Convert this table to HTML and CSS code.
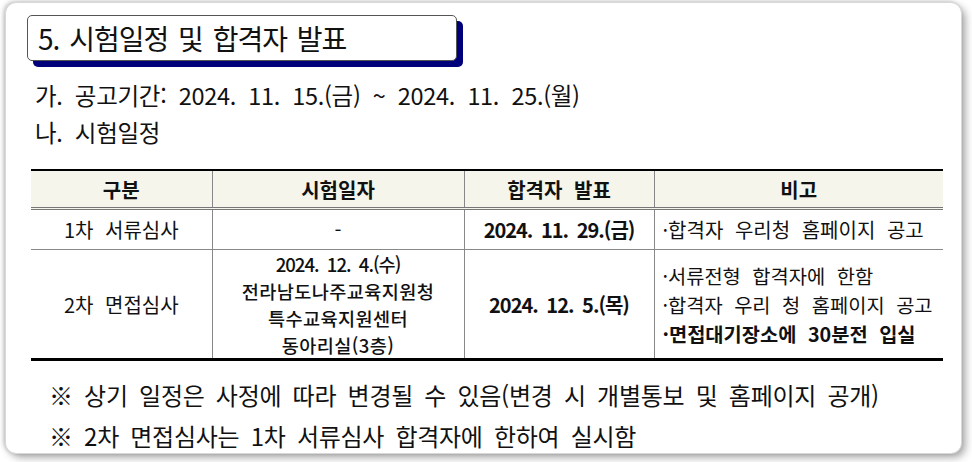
FILE: index.html
```html
<!DOCTYPE html>
<html lang="ko">
<head>
<meta charset="utf-8">
<link rel="stylesheet" href="styles.css">
</head>
<body>
<div class="page">
  <div class="card">
    <div class="title-wrap">
      <div class="title">5. 시험일정 및 합격자 발표</div>
    </div>
    <p class="item item-first">가. 공고기간: 2024. 11. 15.(금) ~ 2024. 11. 25.(월)</p>
    <p class="item">나. 시험일정</p>
    <table class="sched">
      <colgroup>
        <col class="c1"><col class="c2"><col class="c3"><col class="c4">
      </colgroup>
      <thead>
        <tr><th>구분</th><th>시험일자</th><th>합격자 발표</th><th>비고</th></tr>
      </thead>
      <tbody>
        <tr class="r1">
          <td>1차 서류심사</td>
          <td>-</td>
          <td class="bold date">2024. 11. 29.(금)</td>
          <td class="left">·합격자 우리청 홈페이지 공고</td>
        </tr>
        <tr class="r2">
          <td>2차 면접심사</td>
          <td class="med multi"><span class="date">2024. 12. 4.(수)</span><br>전라남도나주교육지원청<br>특수교육지원센터<br>동아리실(3층)</td>
          <td class="bold date">2024. 12. 5.(목)</td>
          <td class="left multi2">·서류전형 합격자에 한함<br>·합격자 우리 청 홈페이지 공고<br><b>·면접대기장소에 30분전 입실</b></td>
        </tr>
      </tbody>
    </table>
    <p class="note note-first">※ 상기 일정은 사정에 따라 변경될 수 있음(변경 시 개별통보 및 홈페이지 공개)</p>
    <p class="note">※ 2차 면접심사는 1차 서류심사 합격자에 한하여 실시함</p>
  </div>
</div>
</body>
</html>
```

FILE: styles.css
```css
html, body {
  margin: 0;
  padding: 0;
  background: #ffffff;
}
body {
  font-family: "Noto Sans CJK KR", "Noto Sans", sans-serif;
  color: #111;
}
.page {
  width: 972px;
  height: 462px;
  box-sizing: border-box;
  padding: 3px 11px 9px 6px;
  background: #fff;
}
.card {
  height: 100%;
  box-sizing: border-box;
  border-radius: 10px;
  background: #fff;
  box-shadow: 0 0 0 1px #d8d8d8, -2px -1px 5px rgba(0,0,0,0.28), 4px 4px 9px rgba(0,0,0,0.38);
  padding: 12px 0 0 21px;
}
.title-wrap {
  display: flex;
}
.title {
  width: 430px;
  height: 46px;
  box-sizing: border-box;
  border: 1px solid #555;
  border-radius: 5px;
  box-shadow: 6px 6px 0 #00007a;
  background: #fff;
  font-size: 28px;
  line-height: 44px;
  padding-left: 10px;
  letter-spacing: -1px;
  word-spacing: 3px;
}
.item {
  margin: 0;
  font-size: 23.5px;
  line-height: 37px;
  padding-left: 8px;
  letter-spacing: -0.3px;
  word-spacing: 6px;
}
.item-first {
  margin-top: 16px;
}
.sched {
  margin-top: 18px;
  margin-left: 4px;
  width: 912px;
  border-collapse: collapse;
  table-layout: fixed;
  font-size: 20px;
  word-spacing: 6px;
}
.c1 { width: 181px; }
.c2 { width: 252px; }
.c3 { width: 190px; }
.c4 { width: 289px; }
.sched th {
  background: #f5f5ec;
  font-weight: 700;
  height: 36px;
  border-top: 2px solid #000;
  border-bottom: 3px double #777;
  border-left: 1px solid #888;
  padding: 0;
}
.sched th:first-child, .sched td:first-child { border-left: none; }
.sched td {
  text-align: center;
  border-left: 1px solid #888;
  border-bottom: 1px solid #888;
  padding: 0;
}
.r1 td { height: 39px; }
.r2 td {
  height: 108px;
  border-bottom: 3px solid #000;
}
.bold { font-weight: 700; }
.med { font-weight: 500; }
.date { letter-spacing: -1px; word-spacing: 4px; }
.multi {
  font-size: 18.6px;
  line-height: 27px;
  padding-top: 1px;
  letter-spacing: 0.4px;
}
.sched td.left {
  text-align: left;
  padding-left: 8px;
}
.multi2 { line-height: 29px; font-size: 19.8px; }
.multi2 b { font-weight: 700; }
.note {
  margin: 0;
  font-size: 24px;
  line-height: 41px;
  padding-left: 22px;
  letter-spacing: -0.3px;
  word-spacing: 5px;
}
.note-first {
  margin-top: 13px;
}
```
